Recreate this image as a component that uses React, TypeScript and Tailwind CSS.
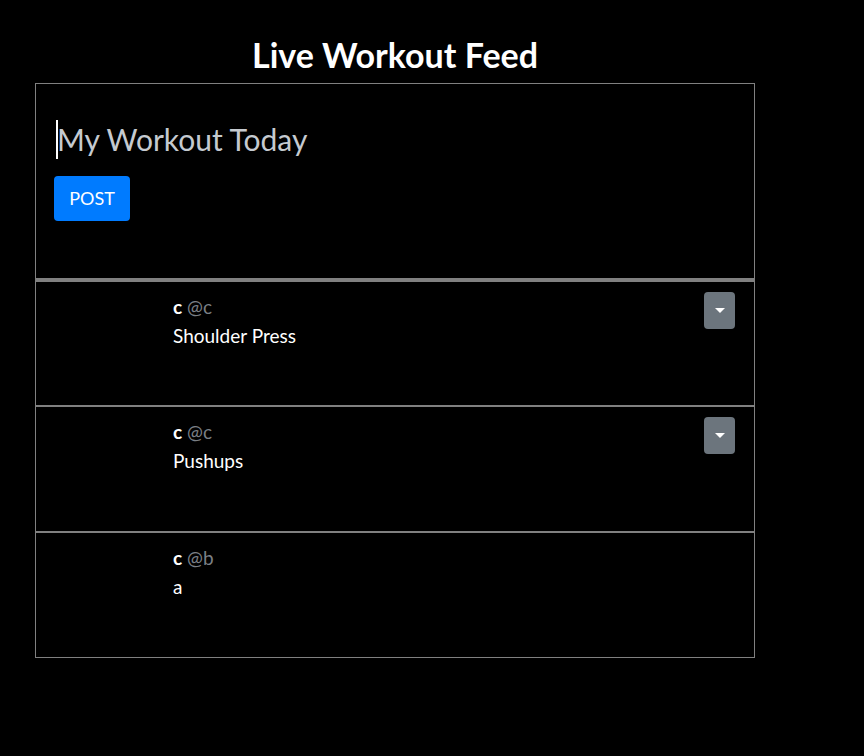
import React from "react";

const posts = [
  { name: "c", handle: "@c", text: "Shoulder Press", menu: true },
  { name: "c", handle: "@c", text: "Pushups", menu: true },
  { name: "c", handle: "@b", text: "a", menu: false },
];

export default function App() {
  return (
    <div className="min-h-[756px] bg-black text-white" style={{ fontFamily: "Lato, 'Noto Sans', sans-serif" }}>
      <div className="ml-[35px] w-[720px] pt-[35px]">
        <h2 className="text-center text-[34px] font-bold leading-[1.2] mb-[7px]">Live Workout Feed</h2>
        <div className="border-x border-t border-[#808080] h-[195px] px-[18px] pt-[35px]">
          <div className="relative">
            <input
              className="block w-full bg-transparent text-[30px] leading-[40px] h-[40px] px-[3px] text-white placeholder:text-[#c5cad0] outline-none"
              placeholder="My Workout Today"
            />
            <span className="absolute left-[2px] top-[1px] w-[2px] h-[39px] bg-white" />
          </div>
          <button className="mt-[17px] w-[76px] h-[45px] rounded-[4px] bg-[#007bff] text-white text-[18px]">POST</button>
        </div>
        {posts.map((p, i) => (
          <div
            key={i}
            className={`flex border-x border-[#808080] ${i === 0 ? "border-t-4 h-[127px]" : "border-t-2 h-[126px]"} ${i === 2 ? "border-b h-[127px]" : ""} pl-[137px] pr-[19px] pt-[10px]`}
          >
            <div className="flex-1 text-[19px] leading-[28px]">
              <div className="mt-[1px]">
                <span className="font-bold">{p.name}</span> <span className="text-[#7a7f85]">{p.handle}</span>
              </div>
              <div className="mt-[1px]">{p.text}</div>
            </div>
            {p.menu && (
              <button className="w-[31px] h-[37px] rounded-[4px] bg-[#6c757d] flex items-center justify-center">
                <span className="block w-0 h-0 border-x-[5px] border-x-transparent border-t-[5px] border-t-white" />
              </button>
            )}
          </div>
        ))}
      </div>
    </div>
  );
}
